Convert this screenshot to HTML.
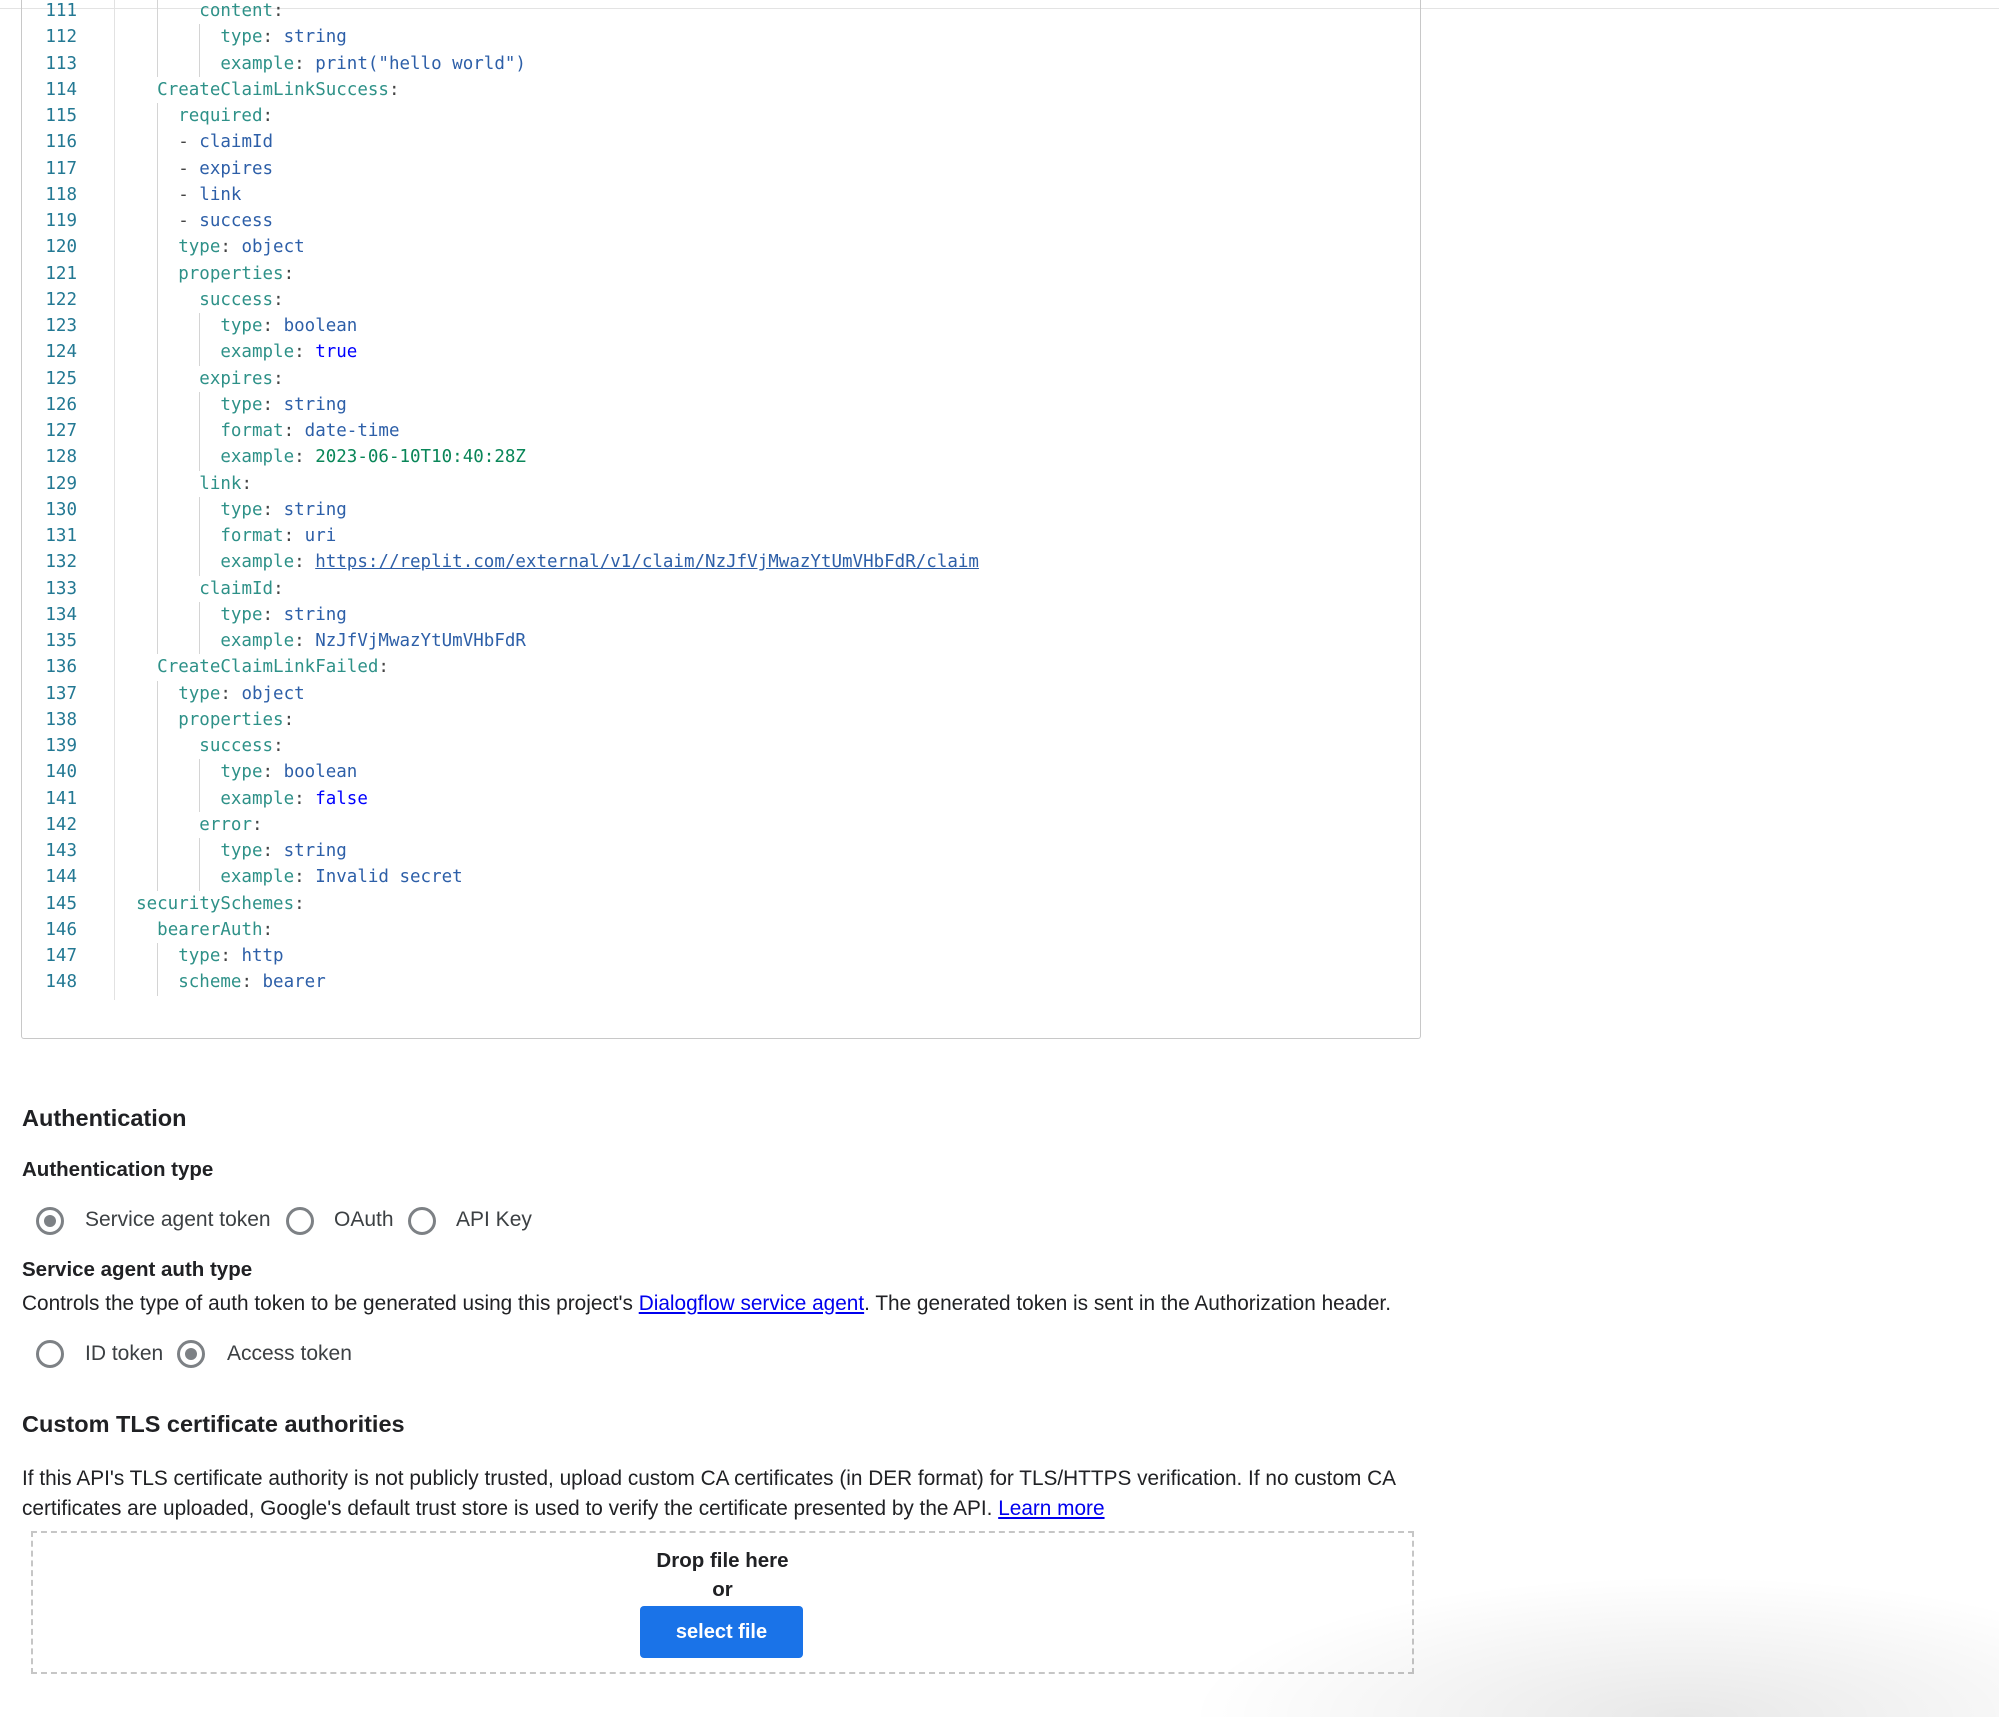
<!DOCTYPE html>
<html style="overflow:hidden;width:1999px;height:1717px"><head><meta charset="utf-8"><style>
*{margin:0;padding:0;box-sizing:border-box}
body{width:1999px;height:1717px;background:#fff;position:relative;overflow:hidden;font-family:"Liberation Sans",Arial,sans-serif;color:#202124}
.topline{position:absolute;left:0;top:8px;width:1999px;height:1px;background:#e3e3e3}
.box{position:absolute;left:21px;top:-10px;width:1400px;height:1049px;border:1.5px solid #c8c8c8;border-top:none;border-radius:0 0 3px 3px}
.sep{position:absolute;left:114px;top:0;width:1px;height:1000px;background:#e2e2e2}
.code{position:absolute;left:0;top:-2px;font-family:"DejaVu Sans Mono","Liberation Mono",monospace;font-size:17.5px;line-height:26.25px}
.ln{position:relative;height:26.25px;white-space:pre}
.num{position:absolute;left:0;width:77px;text-align:right;color:#237893}
.txt{position:absolute;left:115px;color:#444}
.gd{position:absolute;top:0;width:1px;height:26.25px;background:#d4d4d4}
.k{color:#2e9188}.v{color:#2d5fa8}.b{color:#0000ff}.g{color:#098658}.u{color:#2d5fa8;text-decoration:underline}
.h{position:absolute;left:22px;font-size:23.5px;font-weight:700;color:#202124}
.h2{position:absolute;left:22px;font-size:20.5px;font-weight:700;color:#202124}
.t{position:absolute;left:22px;font-size:20.8px;color:#202124;white-space:nowrap}
a{color:#0000ee;text-decoration:underline}
.r{position:absolute;width:28px;height:28px;border:3px solid #7d8185;border-radius:50%}
.r.on::after{content:"";position:absolute;left:5px;top:5px;width:12px;height:12px;border-radius:50%;background:#7d8185}
.rl{position:absolute;font-size:21px;color:#3c4043;white-space:nowrap}
.drop{position:absolute;left:31px;top:1531px;width:1383px;height:143px;border:2px dashed #c6c6c6}
.btn{position:absolute;left:640px;top:1606px;width:163px;height:52px;background:#1a73e8;border-radius:4px;color:#fff;font-weight:700;font-size:20px;text-align:center;line-height:52px}
.shadow{position:absolute;left:1100px;top:1560px;width:899px;height:157px;background:radial-gradient(ellipse 55% 90% at 65% 100%,rgba(0,0,0,0.09),rgba(0,0,0,0) 100%)}
</style></head><body>
<div class="topline"></div>
<div class="box"></div>
<div class="sep" style="left:114px"></div>
<div class="code" id="c">
<div class="ln"><span class="num">111</span><span class="gd" style="left:157px"></span><span class="txt">        <span class="k">content</span>:</span></div>
<div class="ln"><span class="num">112</span><span class="gd" style="left:157px"></span><span class="gd" style="left:199px"></span><span class="txt">          <span class="k">type</span>: <span class="v">string</span></span></div>
<div class="ln"><span class="num">113</span><span class="gd" style="left:157px"></span><span class="gd" style="left:199px"></span><span class="txt">          <span class="k">example</span>: <span class="v">print("hello world")</span></span></div>
<div class="ln"><span class="num">114</span><span class="txt">    <span class="k">CreateClaimLinkSuccess</span>:</span></div>
<div class="ln"><span class="num">115</span><span class="gd" style="left:157px"></span><span class="txt">      <span class="k">required</span>:</span></div>
<div class="ln"><span class="num">116</span><span class="gd" style="left:157px"></span><span class="txt">      - <span class="v">claimId</span></span></div>
<div class="ln"><span class="num">117</span><span class="gd" style="left:157px"></span><span class="txt">      - <span class="v">expires</span></span></div>
<div class="ln"><span class="num">118</span><span class="gd" style="left:157px"></span><span class="txt">      - <span class="v">link</span></span></div>
<div class="ln"><span class="num">119</span><span class="gd" style="left:157px"></span><span class="txt">      - <span class="v">success</span></span></div>
<div class="ln"><span class="num">120</span><span class="gd" style="left:157px"></span><span class="txt">      <span class="k">type</span>: <span class="v">object</span></span></div>
<div class="ln"><span class="num">121</span><span class="gd" style="left:157px"></span><span class="txt">      <span class="k">properties</span>:</span></div>
<div class="ln"><span class="num">122</span><span class="gd" style="left:157px"></span><span class="txt">        <span class="k">success</span>:</span></div>
<div class="ln"><span class="num">123</span><span class="gd" style="left:157px"></span><span class="gd" style="left:199px"></span><span class="txt">          <span class="k">type</span>: <span class="v">boolean</span></span></div>
<div class="ln"><span class="num">124</span><span class="gd" style="left:157px"></span><span class="gd" style="left:199px"></span><span class="txt">          <span class="k">example</span>: <span class="b">true</span></span></div>
<div class="ln"><span class="num">125</span><span class="gd" style="left:157px"></span><span class="txt">        <span class="k">expires</span>:</span></div>
<div class="ln"><span class="num">126</span><span class="gd" style="left:157px"></span><span class="gd" style="left:199px"></span><span class="txt">          <span class="k">type</span>: <span class="v">string</span></span></div>
<div class="ln"><span class="num">127</span><span class="gd" style="left:157px"></span><span class="gd" style="left:199px"></span><span class="txt">          <span class="k">format</span>: <span class="v">date-time</span></span></div>
<div class="ln"><span class="num">128</span><span class="gd" style="left:157px"></span><span class="gd" style="left:199px"></span><span class="txt">          <span class="k">example</span>: <span class="g">2023-06-10T10:40:28Z</span></span></div>
<div class="ln"><span class="num">129</span><span class="gd" style="left:157px"></span><span class="txt">        <span class="k">link</span>:</span></div>
<div class="ln"><span class="num">130</span><span class="gd" style="left:157px"></span><span class="gd" style="left:199px"></span><span class="txt">          <span class="k">type</span>: <span class="v">string</span></span></div>
<div class="ln"><span class="num">131</span><span class="gd" style="left:157px"></span><span class="gd" style="left:199px"></span><span class="txt">          <span class="k">format</span>: <span class="v">uri</span></span></div>
<div class="ln"><span class="num">132</span><span class="gd" style="left:157px"></span><span class="gd" style="left:199px"></span><span class="txt">          <span class="k">example</span>: <span class="u">https://replit.com/external/v1/claim/NzJfVjMwazYtUmVHbFdR/claim</span></span></div>
<div class="ln"><span class="num">133</span><span class="gd" style="left:157px"></span><span class="txt">        <span class="k">claimId</span>:</span></div>
<div class="ln"><span class="num">134</span><span class="gd" style="left:157px"></span><span class="gd" style="left:199px"></span><span class="txt">          <span class="k">type</span>: <span class="v">string</span></span></div>
<div class="ln"><span class="num">135</span><span class="gd" style="left:157px"></span><span class="gd" style="left:199px"></span><span class="txt">          <span class="k">example</span>: <span class="v">NzJfVjMwazYtUmVHbFdR</span></span></div>
<div class="ln"><span class="num">136</span><span class="txt">    <span class="k">CreateClaimLinkFailed</span>:</span></div>
<div class="ln"><span class="num">137</span><span class="gd" style="left:157px"></span><span class="txt">      <span class="k">type</span>: <span class="v">object</span></span></div>
<div class="ln"><span class="num">138</span><span class="gd" style="left:157px"></span><span class="txt">      <span class="k">properties</span>:</span></div>
<div class="ln"><span class="num">139</span><span class="gd" style="left:157px"></span><span class="txt">        <span class="k">success</span>:</span></div>
<div class="ln"><span class="num">140</span><span class="gd" style="left:157px"></span><span class="gd" style="left:199px"></span><span class="txt">          <span class="k">type</span>: <span class="v">boolean</span></span></div>
<div class="ln"><span class="num">141</span><span class="gd" style="left:157px"></span><span class="gd" style="left:199px"></span><span class="txt">          <span class="k">example</span>: <span class="b">false</span></span></div>
<div class="ln"><span class="num">142</span><span class="gd" style="left:157px"></span><span class="txt">        <span class="k">error</span>:</span></div>
<div class="ln"><span class="num">143</span><span class="gd" style="left:157px"></span><span class="gd" style="left:199px"></span><span class="txt">          <span class="k">type</span>: <span class="v">string</span></span></div>
<div class="ln"><span class="num">144</span><span class="gd" style="left:157px"></span><span class="gd" style="left:199px"></span><span class="txt">          <span class="k">example</span>: <span class="v">Invalid secret</span></span></div>
<div class="ln"><span class="num">145</span><span class="txt">  <span class="k">securitySchemes</span>:</span></div>
<div class="ln"><span class="num">146</span><span class="txt">    <span class="k">bearerAuth</span>:</span></div>
<div class="ln"><span class="num">147</span><span class="gd" style="left:157px"></span><span class="txt">      <span class="k">type</span>: <span class="v">http</span></span></div>
<div class="ln"><span class="num">148</span><span class="gd" style="left:157px"></span><span class="txt">      <span class="k">scheme</span>: <span class="v">bearer</span></span></div>
</div>

<div class="h" style="top:1105px">Authentication</div>
<div class="h2" style="top:1158px">Authentication type</div>
<div class="r on" style="left:36px;top:1207px"></div><div class="rl" style="left:85px;top:1208px">Service agent token</div>
<div class="r" style="left:286px;top:1207px"></div><div class="rl" style="left:334px;top:1208px">OAuth</div>
<div class="r" style="left:408px;top:1207px"></div><div class="rl" style="left:456px;top:1208px">API Key</div>
<div class="h2" style="top:1258px">Service agent auth type</div>
<div class="t" style="top:1292px">Controls the type of auth token to be generated using this project's <a>Dialogflow service agent</a>. The generated token is sent in the Authorization header.</div>
<div class="r" style="left:36px;top:1340px"></div><div class="rl" style="left:85px;top:1342px">ID token</div>
<div class="r on" style="left:177px;top:1340px"></div><div class="rl" style="left:227px;top:1342px">Access token</div>
<div class="h" style="top:1411px">Custom TLS certificate authorities</div>
<div class="t" style="top:1464px;line-height:29.5px;white-space:normal;width:1405px">If this API's TLS certificate authority is not publicly trusted, upload custom CA certificates (in DER format) for TLS/HTTPS verification. If no custom CA certificates are uploaded, Google's default trust store is used to verify the certificate presented by the API. <a>Learn more</a></div>
<div class="drop"></div>
<div style="position:absolute;left:31px;width:1383px;top:1549px;text-align:center;font-weight:700;font-size:20.5px">Drop file here</div>
<div style="position:absolute;left:31px;width:1383px;top:1578px;text-align:center;font-weight:700;font-size:20.5px">or</div>
<div class="btn">select file</div>
<div class="shadow"></div>
</body></html>
